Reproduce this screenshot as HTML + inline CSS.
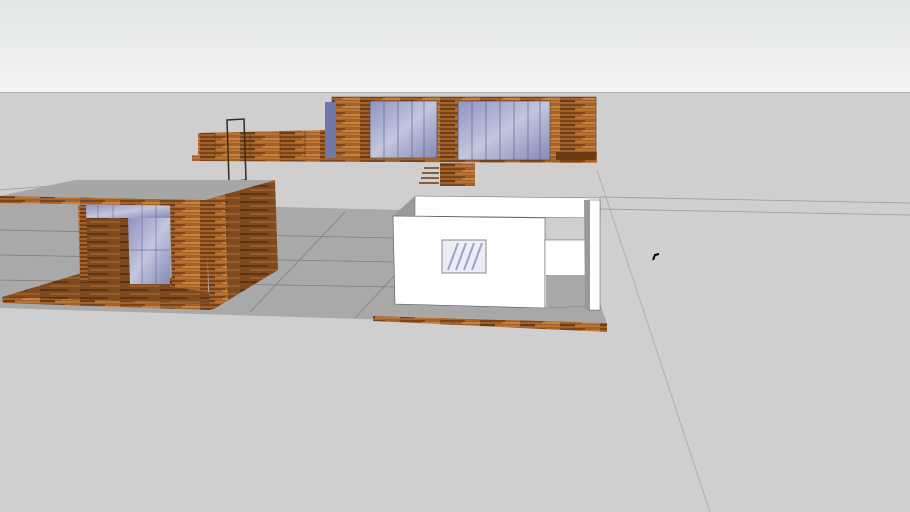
<!DOCTYPE html>
<html><head><meta charset="utf-8"><style>
html,body{margin:0;padding:0;width:910px;height:512px;overflow:hidden;background:#cfcfcf}
svg{display:block}
</style></head><body>
<svg width="910" height="512" viewBox="0 0 910 512" xmlns="http://www.w3.org/2000/svg">
<defs>
<linearGradient id="sky" x1="0" y1="0" x2="0" y2="1"><stop offset="0" stop-color="#e3e6e7"/><stop offset="1" stop-color="#f3f4f4"/></linearGradient>
<pattern id="wood" width="40" height="8" patternUnits="userSpaceOnUse">
<rect width="40" height="8" fill="#a4622a"/>
<rect y="0" width="25" height="2" fill="#7a451a"/><rect x="22" y="2" width="18" height="2" fill="#c88240"/>
<rect y="4" width="15" height="2" fill="#6b3d17"/><rect x="15" y="5" width="25" height="2" fill="#b87434"/>
</pattern>
<pattern id="wooddark" width="40" height="8" patternUnits="userSpaceOnUse">
<rect width="40" height="8" fill="#7e4a1f"/>
<rect y="1" width="28" height="2" fill="#5e3413"/><rect x="10" y="5" width="30" height="2" fill="#9a5c28"/>
</pattern>
<linearGradient id="glass" x1="0" y1="0" x2="1" y2="1"><stop offset="0" stop-color="#8f93c2"/><stop offset="0.5" stop-color="#c3c6dd"/><stop offset="1" stop-color="#8589b8"/></linearGradient>
</defs>
<rect width="910" height="93" fill="url(#sky)"/>
<line x1="0" y1="92.5" x2="910" y2="92.5" stroke="#b0b0b0"/>
<line x1="597" y1="170" x2="710" y2="512" stroke="#a8a8a8" stroke-width="0.8"/>
<line x1="600" y1="197" x2="910" y2="203" stroke="#9a9a9a" stroke-width="0.8"/>
<line x1="600" y1="209" x2="910" y2="215" stroke="#9a9a9a" stroke-width="0.8"/>
<line x1="0" y1="190" x2="75" y2="184" stroke="#999" stroke-width="0.8"/>
<!-- gray slab left -->
<polygon points="0,200 400,210 396,320 0,308" fill="#a9a9a9"/>
<g stroke="#7f7f7f" stroke-width="0.8">
<line x1="0" y1="230" x2="395" y2="238"/><line x1="0" y1="255" x2="395" y2="262"/><line x1="0" y1="280" x2="395" y2="287"/>
<line x1="60" y1="300" x2="180" y2="205"/><line x1="150" y1="305" x2="260" y2="210"/><line x1="250" y1="312" x2="345" y2="212"/><line x1="355" y1="318" x2="395" y2="275"/>
</g>
<!-- upper building -->
<polygon points="192,155 597,152 597,163 192,161" fill="url(#wood)"/>
<polygon points="198,133 325,130 325,157 198,158" fill="url(#wood)"/>
<g stroke="#5a3410" stroke-width="0.6"><line x1="215" y1="133" x2="215" y2="157"/><line x1="250" y1="132" x2="250" y2="157"/><line x1="280" y1="131" x2="280" y2="157"/><line x1="305" y1="131" x2="305" y2="157"/></g>
<polygon points="332,97 596,97 596,157 332,158" fill="url(#wood)" stroke="#5a3410" stroke-width="0.6"/>
<polygon points="325,102 336,102 336,158 325,158" fill="#6f78a8"/>
<rect x="370" y="101" width="67" height="57" fill="url(#glass)" stroke="#444" stroke-width="0.6"/>
<rect x="458" y="101" width="92" height="59" fill="url(#glass)" stroke="#444" stroke-width="0.6"/>
<g stroke="#555a80" stroke-width="0.6"><line x1="384" y1="101" x2="384" y2="158"/><line x1="398" y1="101" x2="398" y2="158"/><line x1="412" y1="101" x2="412" y2="158"/><line x1="424" y1="101" x2="424" y2="158"/>
<line x1="472" y1="101" x2="472" y2="160"/><line x1="486" y1="101" x2="486" y2="160"/><line x1="500" y1="101" x2="500" y2="160"/><line x1="514" y1="101" x2="514" y2="160"/><line x1="528" y1="101" x2="528" y2="160"/><line x1="540" y1="101" x2="540" y2="160"/></g>
<rect x="556" y="152" width="40" height="8" fill="#6a3b15"/>
<polygon points="440,163 475,163 475,186 440,186" fill="url(#wood)"/>
<g stroke="#6a3b15" stroke-width="1.5"><line x1="424" y1="168" x2="439" y2="168"/><line x1="422" y1="173" x2="439" y2="173"/><line x1="421" y1="178" x2="439" y2="178"/><line x1="419" y1="183" x2="439" y2="183"/></g>
<polygon points="227,120 244,119 246,180 229,182" fill="none" stroke="#3a2a1a" stroke-width="1.5"/>
<!-- left building -->
<polygon points="80,205 170,205 170,283 80,282" fill="url(#wooddark)"/>
<polygon points="2,297 85,272 205,280 212,304 210,309" fill="url(#wooddark)"/>
<polygon points="2,297 210,304 210,310 3,303" fill="url(#wood)"/>
<polygon points="82,205 170,205 170,218 82,218" fill="url(#glass)"/>
<polygon points="128,218 170,218 170,284 130,284" fill="url(#glass)"/>
<g stroke="#555a80" stroke-width="0.5"><line x1="142" y1="205" x2="142" y2="284"/><line x1="156" y1="205" x2="156" y2="284"/><line x1="98" y1="205" x2="98" y2="218"/><line x1="113" y1="205" x2="113" y2="218"/><line x1="128" y1="250" x2="170" y2="250"/></g>
<polygon points="78,205 86,205 88,282 80,282" fill="url(#wood)"/>
<polygon points="170,205 207,205 208,292 172,287" fill="url(#wood)"/>
<polygon points="205,200 275,180 278,270 212,310" fill="url(#wooddark)"/>
<polygon points="205,200 225,195 228,300 210,310" fill="url(#wood)"/>
<polygon points="0,196 75,180 275,180 205,200" fill="#a6a6a6"/>
<polygon points="0,196 205,200 205,206 0,203" fill="url(#wood)"/>
<!-- white building -->
<polygon points="378,316 395,300 600,304 607,323" fill="#a8a8a8"/>
<polygon points="373,316 607,323 607,332 373,321" fill="url(#wood)"/>
<polygon points="393,216 415,196 415,296 395,303" fill="#9a9a9a"/>
<polygon points="415,196 600,198 600,218 415,216" fill="#fdfdfd" stroke="#666" stroke-width="0.5"/>
<polygon points="393,216 545,218 545,308 395,304" fill="#ffffff" stroke="#555" stroke-width="0.6"/>
<polygon points="545,240 588,240 588,306 545,308" fill="#fff" stroke="#555" stroke-width="0.5"/>
<polygon points="546,275 588,275 588,306 546,308" fill="#a8a8a8"/>
<polygon points="588,200 600,200 600,310 588,310" fill="#fff" stroke="#555" stroke-width="0.5"/>
<polygon points="584,200 590,200 590,310 585,310" fill="#999"/>
<rect x="442" y="240" width="44" height="33" fill="#eceef5" stroke="#888" stroke-width="1"/>
<g stroke="#9ea2cc" stroke-width="2"><line x1="448" y1="270" x2="458" y2="243"/><line x1="456" y1="270" x2="466" y2="243"/><line x1="464" y1="270" x2="474" y2="243"/><line x1="472" y1="270" x2="482" y2="243"/></g>
<path d="M653,260 L655,255 L659,254" fill="none" stroke="#000" stroke-width="2"/>
</svg>
</body></html>
